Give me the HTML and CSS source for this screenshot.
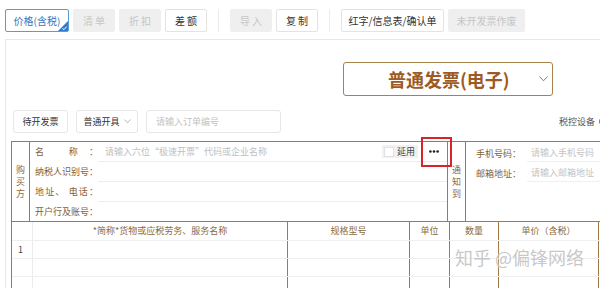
FILE: index.html
```html
<!DOCTYPE html>
<html lang="zh-CN">
<head>
    <meta charset="UTF-8">
    <title>开具发票</title>
    <link rel="stylesheet" href="styles.css">
</head>
<body>
    <div class="toolbar">
        <button class="btn btn-price">价格(含税)
            <svg class="corner" width="10" height="10" viewBox="0 0 10 10"><polygon points="10,0 10,10 0,10" fill="#2d7bd6"/><polyline points="4.5,7.5 6,8.6 8.6,5.6" fill="none" stroke="#fff" stroke-width="1"/></svg>
        </button>
        <button class="btn btn-off">清 单</button>
        <button class="btn btn-off">折 扣</button>
        <button class="btn">差 额</button>
        <span class="sep"></span>
        <button class="btn btn-off">导 入</button>
        <button class="btn">复 制</button>
        <span class="sep"></span>
        <button class="btn btn-red">红字/信息表/确认单</button>
        <button class="btn btn-off btn-void">未开发票作废</button>
    </div>

    <div class="panel">
        <div class="title-row">
            <div class="title-box">
                <span class="title-text">普通发票(电子)</span>
                <svg class="title-arrow" width="9" height="6" viewBox="0 0 9 6"><polyline points="0.5,0.5 4.5,4.8 8.5,0.5" fill="none" stroke="#8a7a66" stroke-width="1"/></svg>
            </div>
        </div>

        <div class="action-row">
            <button class="abtn abtn-pending">待开发票</button>
            <button class="abtn abtn-mode">普通开具
                <svg width="7" height="5" viewBox="0 0 7 5"><polyline points="0.5,0.5 3.5,3.8 6.5,0.5" fill="none" stroke="#bbb" stroke-width="1"/></svg>
            </button>
            <div class="order-input">请输入订单编号</div>
            <div class="device">税控设备 <span class="device-dot"></span></div>
        </div>

        <div class="buyer">
            <div class="side-label">购<br>买<br>方</div>
            <div class="fields">
                <div class="field">
                    <span class="flabel">名 称：</span>
                    <div class="finput">
                        <span class="ph">请输入六位“极速开票”代码或企业名称</span>
                        <span class="reuse"><i class="reuse-box"></i>延用</span>
                        <button class="more">
                            <svg width="10" height="3" viewBox="0 0 10 3"><circle cx="1.4" cy="1.5" r="1.3" fill="#222"/><circle cx="5" cy="1.5" r="1.3" fill="#222"/><circle cx="8.6" cy="1.5" r="1.3" fill="#222"/></svg>
                        </button>
                    </div>
                </div>
                <div class="field">
                    <span class="flabel">纳税人识别号：</span>
                    <div class="finput"></div>
                </div>
                <div class="field">
                    <span class="flabel">地址、 电话：</span>
                    <div class="finput"></div>
                </div>
                <div class="field field-last">
                    <span class="flabel">开户行及账号：</span>
                    <div class="finput"></div>
                </div>
            </div>
            <div class="side-label">通<br>知<br>到</div>
            <div class="notify">
                <div class="nrow">
                    <span class="nlabel">手机号码：</span>
                    <span class="ninput">请输入手机号码</span>
                </div>
                <div class="nrow">
                    <span class="nlabel">邮箱地址：</span>
                    <span class="ninput">请输入邮箱地址</span>
                </div>
            </div>
        </div>

        <div class="goods">
            <div class="grow ghead">
                <div class="c c-idx"></div>
                <div class="c c-name">*简称*货物或应税劳务、服务名称</div>
                <div class="c c-spec">规格型号</div>
                <div class="c c-unit">单位</div>
                <div class="c c-qty">数量</div>
                <div class="c c-price">单价（含税）</div>
                <div class="c c-rest"></div>
            </div>
            <div class="grow">
                <div class="c c-idx">1</div>
                <div class="c c-name"></div>
                <div class="c c-spec"></div>
                <div class="c c-unit"></div>
                <div class="c c-qty"></div>
                <div class="c c-price"></div>
                <div class="c c-rest"></div>
            </div>
            <div class="grow">
                <div class="c c-idx"></div>
                <div class="c c-name"></div>
                <div class="c c-spec"></div>
                <div class="c c-unit"></div>
                <div class="c c-qty"></div>
                <div class="c c-price"></div>
                <div class="c c-rest"></div>
            </div>
            <div class="grow">
                <div class="c c-idx"></div>
                <div class="c c-name"></div>
                <div class="c c-spec"></div>
                <div class="c c-unit"></div>
                <div class="c c-qty"></div>
                <div class="c c-price"></div>
                <div class="c c-rest"></div>
            </div>
        </div>
    </div>

    <div class="mark-box"></div>
    <div class="watermark">知乎 @偏锋网络</div>
</body>
</html>
```

FILE: styles.css
```css
* {
    box-sizing: border-box;
}

body {
    margin: 0;
    width: 600px;
    height: 288px;
    overflow: hidden;
    position: relative;
    background-color: #fff;
    font-family: "Noto Sans CJK SC", "Microsoft YaHei", sans-serif;
    font-size: 9px;
    color: #333;
}

button {
    font-family: inherit;
    cursor: pointer;
}

/* top toolbar */
.toolbar {
    display: flex;
    gap: 4px;
    height: 39px;
    padding: 9px 0 0 5px;
}

.btn {
    position: relative;
    width: 42px;
    height: 23px;
    padding: 0;
    border: 1px solid #e3e3e3;
    border-radius: 2px;
    background-color: #fff;
    font-size: 10px;
    color: #333;
}

.btn-off {
    background-color: #efefef;
    border-color: #efefef;
    color: #c6c6c6;
}

.btn-price {
    width: 64px;
    border-color: #5d9ad8;
    color: #3a74bb;
}

.btn-price .corner {
    position: absolute;
    right: 0;
    bottom: 0;
}

.btn-red {
    width: 103px;
}

.btn-void {
    width: 77px;
}

.sep {
    width: 1px;
    height: 23px;
    margin: 0 7px;
    background-color: #ececec;
}

/* main panel */
.panel {
    width: 900px;
    height: 249px;
    margin-left: 5px;
    border: 1px solid #e8e8e8;
    border-bottom: none;
}

.title-row {
    padding: 22px 0 0 337px;
}

.title-box {
    display: flex;
    align-items: center;
    width: 210px;
    height: 34px;
    border: 1px solid #a9814f;
    border-radius: 3px;
}

.title-text {
    margin-left: 44px;
    font-size: 18px;
    font-weight: bold;
    color: #9d5a22;
}

.title-arrow {
    margin-left: 29px;
}

.action-row {
    display: flex;
    align-items: center;
    gap: 8px;
    height: 23px;
    margin-top: 14px;
    padding-left: 7px;
}

.abtn {
    height: 23px;
    padding: 0;
    border: 1px solid #e6e6e6;
    border-radius: 3px;
    background-color: #fff;
    font-size: 9px;
    color: #333;
}

.abtn-pending {
    width: 55px;
}

.abtn-mode {
    display: flex;
    align-items: center;
    justify-content: center;
    gap: 4px;
    width: 62px;
}

.order-input {
    width: 135px;
    height: 23px;
    padding-left: 9px;
    line-height: 21px;
    border: 1px solid #e6e6e6;
    border-radius: 3px;
    color: #c3c3c3;
}

.device {
    display: flex;
    align-items: center;
    gap: 4px;
    margin-left: 270px;
    color: #555;
}

.device-dot {
    width: 9px;
    height: 9px;
    border-radius: 50%;
    border: 2px solid #777;
}

/* buyer block */
.buyer {
    display: flex;
    width: 880px;
    height: 81px;
    margin: 8px 0 0 5px;
    border: 1px solid #a27a48;
}

.side-label {
    display: flex;
    align-items: center;
    justify-content: center;
    width: 18px;
    border-right: 1px solid #a27a48;
    line-height: 12px;
    font-size: 9px;
    color: #8b6a40;
}

.fields {
    display: flex;
    flex-direction: column;
    width: 418px;
    border-right: 1px solid #a27a48;
}

.field {
    display: flex;
    flex: 1;
    align-items: stretch;
    padding-left: 5px;
}

.flabel {
    width: 63px;
    line-height: 20px;
    text-align-last: justify;
    color: #7f6138;
}

.finput {
    display: flex;
    align-items: center;
    flex: 1;
    padding-left: 7px;
    border-bottom: 1px solid #ededed;
}

.field-last .finput {
    border-bottom: none;
}

.ph {
    color: #c0c0c0;
}

.reuse {
    display: flex;
    align-items: center;
    gap: 3px;
    height: 13px;
    margin-left: auto;
    padding: 0 3px 0 2px;
    background-color: #f1f1f1;
    color: #444;
}

.reuse-box {
    width: 10px;
    height: 10px;
    background-color: #fff;
    border: 1px solid #e2e2e2;
}

.more {
    display: flex;
    align-items: center;
    justify-content: center;
    width: 24px;
    height: 18px;
    margin: 0 1px 0 4px;
    padding: 0;
    border: none;
    background-color: #fff;
}

.notify {
    flex: 1;
    padding-top: 1px;
}

.nrow {
    display: flex;
    align-items: center;
    height: 20px;
    padding-left: 10px;
}

.nlabel {
    width: 51px;
    color: #7f6138;
}

.ninput {
    flex: 1;
    height: 18px;
    padding-left: 4px;
    line-height: 18px;
    border-bottom: 1px solid #f0f0f0;
    color: #c3c3c3;
}

/* goods table */
.goods {
    width: 880px;
    margin-left: 5px;
    border-left: 1px solid #a27a48;
}

.grow {
    display: flex;
    height: 18px;
    border-bottom: 1px solid #efefef;
}

.ghead {
    height: 19px;
    color: #8b6a40;
}

.c {
    line-height: 17px;
    text-align: center;
    border-right: 1px solid #a27a48;
}

.c-idx {
    width: 21px;
    padding-right: 3px;
    border-right-color: #ececec;
    color: #444;
}

.c-name {
    width: 255px;
}

.c-spec {
    width: 122px;
}

.c-unit {
    width: 40px;
}

.c-qty {
    width: 49px;
}

.c-price {
    width: 100px;
}

.c-rest {
    flex: 1;
    border-right: none;
}

/* overlays */
.mark-box {
    position: absolute;
    left: 421px;
    top: 137px;
    width: 31px;
    height: 30px;
    border: 2px solid #d8232a;
}

.watermark {
    position: absolute;
    left: 455px;
    top: 244px;
    font-size: 18px;
    color: rgba(175, 175, 175, 0.7);
    text-shadow: 0 0 2px #fff;
}
```
